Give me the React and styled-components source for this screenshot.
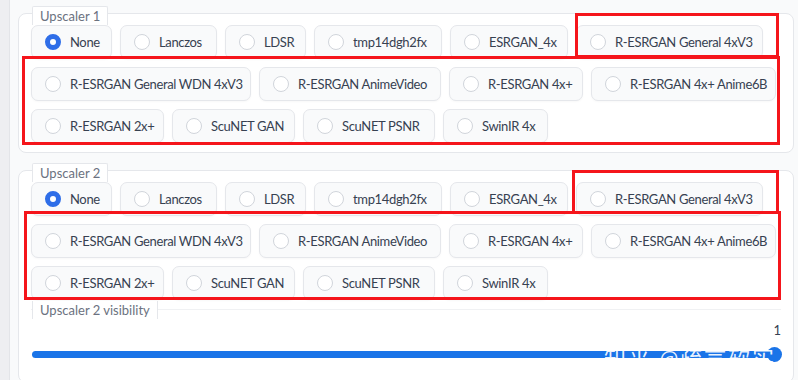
import React from 'react'
import styled, { createGlobalStyle } from 'styled-components'

// widths read off the reference so the rows line up with the markers
const rows = [
  [['None', 81], ['Lanczos', 97], ['LDSR', 81], ['tmp14dgh2fx', 128], ['ESRGAN_4x', 118], ['R-ESRGAN General 4xV3', 187]],
  [['R-ESRGAN General WDN 4xV3', 220], ['R-ESRGAN AnimeVideo', 182], ['R-ESRGAN 4x+', 134], ['R-ESRGAN 4x+ Anime6B', 185]],
  [['R-ESRGAN 2x+', 133], ['ScuNET GAN', 123], ['ScuNET PSNR', 132], ['SwinIR 4x', 105]],
]

const marks = [
  { left: 575, top: 13, width: 204, height: 45 },
  { left: 22, top: 56, width: 758, height: 89 },
  { left: 572, top: 170, width: 207, height: 44 },
  { left: 24, top: 211, width: 757, height: 89 },
]

const Upscaler = ({ title, children }) => (
  <Card>
    <Label>{title}</Label>
    <Rows>
      {rows.map((row, i) => (
        <Row key={i}>
          {row.map(([name, width]) => (
            <Option key={name} $width={width}>
              <Radio $checked={name === 'None'} />
              <OptionText>{name}</OptionText>
            </Option>
          ))}
        </Row>
      ))}
    </Rows>
    {children}
  </Card>
)

const App = () => {
  return (
    <Page>
      <GlobalStyle />
      <Column>
        <Upscaler title="Upscaler 1" />
        <Upscaler title="Upscaler 2">
          <SliderBlock>
            <SliderLabel>Upscaler 2 visibility</SliderLabel>
            <Value>1</Value>
            <Track>
              <Thumb />
            </Track>
          </SliderBlock>
        </Upscaler>
      </Column>

      {marks.map((m, i) => (
        <Mark key={i} style={m} />
      ))}
      <Watermark>知乎 @疏言软实</Watermark>
    </Page>
  )
}

const GlobalStyle = createGlobalStyle`
  body {
    margin: 0;
    background: #eeeef1;
    font-family: "Lato", "Noto Sans", "Noto Sans CJK SC", sans-serif;
  }
`

const Page = styled.div`
  position: relative;
  width: 798px;
  height: 380px;
  overflow: hidden;
  background: #eeeef1;
`

const Column = styled.div`
  margin-left: 9px;
  height: 100%;
  border-left: 1px solid #e3e4e8;
  background: #f9fafb;
  padding: 13px 4px 0 8px;
  display: flex;
  flex-direction: column;
  gap: 17px;
`

const Card = styled.div`
  background: #fff;
  border: 1px solid #e5e7eb;
  border-radius: 8px;
  padding: 0 12px 9px;
  display: flex;
  flex-direction: column;
  align-items: flex-start;
`

const Label = styled.div`
  margin: -8px 0 0 1px;
  height: 18px;
  padding: 0 7px;
  border: 1px solid #e5e7eb;
  border-bottom: none;
  border-radius: 2px 2px 0 0;
  background: #fff;
  color: #6b7280;
  font-size: 13px;
  line-height: 18px;
`

const Rows = styled.div`
  display: flex;
  flex-direction: column;
  gap: 8px;
`

const Row = styled.div`
  display: flex;
  gap: 8px;
`

const Option = styled.div`
  display: flex;
  align-items: center;
  gap: 9px;
  width: ${p => p.$width}px;
  height: 34px;
  box-sizing: border-box;
  padding: 0 0 0 13px;
  border: 1px solid #e5e7eb;
  border-radius: 7px;
  background: #f9fafb;
  box-shadow: 0 1px 2px rgba(0, 0, 0, 0.03);
  overflow: hidden;
`

const Radio = styled.span`
  width: 16px;
  height: 16px;
  box-sizing: border-box;
  border-radius: 50%;
  border: ${p => (p.$checked ? '5px solid #2f6ee8' : '1px solid #d1d5db')};
  background: #fff;
  flex-shrink: 0;
`

const OptionText = styled.span`
  color: #374151;
  font-size: 13px;
  letter-spacing: -0.35px;
  white-space: nowrap;
`

const SliderBlock = styled.div`
  align-self: stretch;
  margin-top: 1px;
  display: flex;
  flex-direction: column;
  padding-bottom: 15px;
  background: linear-gradient(#f0f1f3, #f0f1f3) 0 8px / 100% 1px no-repeat;
`

const SliderLabel = styled.div`
  align-self: flex-start;
  margin-left: 1px;
  height: 18px;
  padding: 0 7px;
  border-left: 1px solid #e5e7eb;
  border-right: 1px solid #e5e7eb;
  background: #fff;
  color: #6b7280;
  font-size: 13px;
  line-height: 18px;
`

const Value = styled.div`
  align-self: flex-end;
  margin-top: 3px;
  color: #374151;
  font-size: 13px;
  line-height: 16px;
`

const Track = styled.div`
  position: relative;
  margin: 13px 6px 0 1px;
  height: 7px;
  border-radius: 4px;
  background: #1a74e8;
`

const Thumb = styled.div`
  position: absolute;
  right: -7px;
  top: -4px;
  width: 15px;
  height: 15px;
  border-radius: 50%;
  background: #1a74e8;
`

const Mark = styled.div`
  position: absolute;
  box-sizing: border-box;
  border: 3px solid #f5151b;
  pointer-events: none;
`

const Watermark = styled.div`
  position: absolute;
  left: 604px;
  top: 340px;
  color: rgba(255, 255, 255, 0.92);
  font-size: 22px;
  letter-spacing: 2px;
  white-space: nowrap;
`

export default App
